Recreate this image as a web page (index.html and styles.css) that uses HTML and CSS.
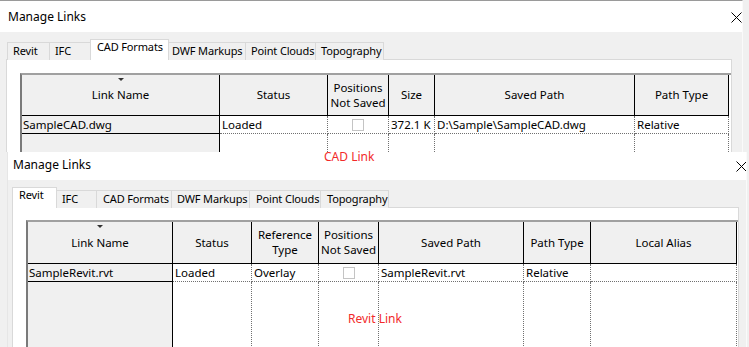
FILE: index.html
```html
<!DOCTYPE html>
<html>
<head>
<meta charset="utf-8">
<link rel="stylesheet" href="styles.css">
</head>
<body>
<div class="desk">
  <div class="dlg dlg1">
    <div class="titlebar">
      <span class="title">Manage Links</span>
      <svg class="close" width="11" height="11" viewBox="0 0 11 11"><path d="M0.5 0.5 L10.5 10.5 M10.5 0.5 L0.5 10.5" stroke="#000" stroke-width="1" fill="none"/></svg>
    </div>
    <div class="body">
      <div class="tabs">
        <div class="tab t1a">Revit</div>
        <div class="tab t1b">IFC</div>
        <div class="tab sel t1c">CAD Formats</div>
        <div class="tab t1d">DWF Markups</div>
        <div class="tab t1e">Point Clouds</div>
        <div class="tab t1f">Topography</div>
      </div>
      <div class="panel panel1">
        <div class="grid grid1">
          <div class="h first"><span class="sort"></span>Link Name</div>
          <div class="h">Status</div>
          <div class="h">Positions<br>Not Saved</div>
          <div class="h">Size</div>
          <div class="h">Saved Path</div>
          <div class="h">Path Type</div>

          <div class="rh">SampleCAD.dwg</div>
          <div class="c">Loaded</div>
          <div class="c center"><span class="chk"></span></div>
          <div class="c">372.1 K</div>
          <div class="c">D:\Sample\SampleCAD.dwg</div>
          <div class="c">Relative</div>

          <div class="rhf"></div>
          <div class="f"></div>
          <div class="f"></div>
          <div class="f"></div>
          <div class="f"></div>
          <div class="f"></div>
        </div>
      </div>
    </div>
  </div>

  <div class="dlg dlg2">
    <div class="titlebar">
      <span class="title">Manage Links</span>
      <svg class="close" width="11" height="11" viewBox="0 0 11 11"><path d="M0.5 0.5 L10.5 10.5 M10.5 0.5 L0.5 10.5" stroke="#000" stroke-width="1" fill="none"/></svg>
    </div>
    <div class="body">
      <div class="tabs">
        <div class="tab sel t2a">Revit</div>
        <div class="tab t2b">IFC</div>
        <div class="tab t2c">CAD Formats</div>
        <div class="tab t2d">DWF Markups</div>
        <div class="tab t2e">Point Clouds</div>
        <div class="tab t2f">Topography</div>
      </div>
      <div class="panel panel2">
        <div class="grid grid2">
          <div class="h first"><span class="sort"></span>Link Name</div>
          <div class="h">Status</div>
          <div class="h">Reference<br>Type</div>
          <div class="h">Positions<br>Not Saved</div>
          <div class="h">Saved Path</div>
          <div class="h">Path Type</div>
          <div class="h">Local Alias</div>

          <div class="rh">SampleRevit.rvt</div>
          <div class="c">Loaded</div>
          <div class="c">Overlay</div>
          <div class="c center"><span class="chk"></span></div>
          <div class="c">SampleRevit.rvt</div>
          <div class="c">Relative</div>
          <div class="c"></div>

          <div class="rhf"></div>
          <div class="f"></div>
          <div class="f"></div>
          <div class="f"></div>
          <div class="f"></div>
          <div class="f"></div>
          <div class="f"></div>
        </div>
      </div>
    </div>
  </div>

  <span class="note note-cad">CAD Link</span>
  <span class="note note-revit">Revit Link</span>
</div>
</body>
</html>
```

FILE: styles.css
```css
* { box-sizing: border-box; }
html, body {
  margin: 0;
  padding: 0;
  width: 749px;
  height: 347px;
  overflow: hidden;
  background: #f0f0f0;
}
body {
  font-family: "Noto Sans", "Open Sans", sans-serif;
  font-size: 11.5px;
  color: #000;
}
.desk {
  position: relative;
  width: 749px;
  height: 347px;
  overflow: hidden;
}
.dlg {
  background: #f0f0f0;
  overflow: hidden;
}
.dlg1 {
  width: 743px;
  height: 152px;
  border-top: 1px solid #9a9a9a;
  border-right: 1px solid #fafafa;
}
.dlg2 {
  position: absolute;
  left: 7px;
  top: 152px;
  width: 740px;
  height: 195px;
  border-left: 1px solid #e6e6e6;
  border-right: 1px solid #fafafa;
}
.titlebar {
  background: #fff;
  display: flex;
  align-items: center;
  justify-content: space-between;
}
.dlg1 .titlebar {
  height: 31px;
  padding: 0 0 0 8px;
}
.dlg1 .close { margin-right: 0px; margin-top: 2px; }
.dlg2 .titlebar {
  height: 28px;
  padding: 0 0 0 5px;
}
.dlg2 .close { margin-right: -1px; margin-top: 0px; }
.title {
  font-size: 12px;
  line-height: 16px;
}
.dlg1 .title { margin-top: 0px; }
.dlg2 .title { margin-top: -2px; }

.body {
  padding-top: 7px;
}
.tabs {
  display: flex;
  align-items: flex-end;
  height: 21px;
  margin-bottom: -1px;
  position: relative;
  z-index: 1;
  font-size: 11px;
  letter-spacing: -0.15px;
}
.dlg1 .tabs { padding-left: 7px; }
.dlg2 .tabs { padding-left: 4px; }
.tab {
  height: 18px;
  background: #f0f0f0;
  border: 1px solid #d9d9d9;
  border-bottom: none;
  margin-right: -1px;
  padding-left: 5px;
  line-height: 16px;
  white-space: nowrap;
  overflow: hidden;
}
.tab.sel {
  height: 21px;
  background: #fff;
  line-height: 14px;
  padding-left: 6px;
}
.t1a { width: 43px; }
.t1b { width: 42px; }
.t1c { width: 79px; }
.t1d { width: 78px; padding-left: 3px; }
.t1e { width: 71px; }
.t1f { width: 69px; }
.t2a { width: 45px; }
.t2b { width: 41px; }
.t2c { width: 76px; padding-left: 6px; }
.t2d { width: 79px; }
.t2e { width: 72px; padding-left: 6px; }
.t2f { width: 69px; padding-left: 6px; }

.panel {
  background: #fff;
  border: 1px solid #d9d9d9;
}
.panel1 {
  margin-left: 6px;
  width: 726px;
  height: 200px;
  padding: 13px 0 0 13px;
}
.panel2 {
  margin-left: 4px;
  width: 727px;
  height: 200px;
  padding: 12px 0 0 13px;
}
.grid {
  display: grid;
  border-top: 2px solid #a0a0a0;
  border-left: 2px solid #7a7a7a;
  line-height: 15px;
}
.grid1 {
  grid-template-columns: 198px 108px 61px 46px 200px 94px;
  grid-template-rows: 41px 18px 120px;
}
.grid2 {
  grid-template-columns: 145px 79px 67px 60px 145px 67px 146px;
  grid-template-rows: 42px 18px 120px;
}
.h {
  position: relative;
  background: #f0f0f0;
  border-right: 1px solid #000;
  border-bottom: 1px solid #000;
  display: flex;
  align-items: center;
  justify-content: center;
  text-align: center;
  padding-bottom: 1px;
}
.sort {
  position: absolute;
  top: 3px;
  left: 50%;
  margin-left: -3px;
  width: 0;
  height: 0;
  border-left: 3px solid transparent;
  border-right: 3px solid transparent;
  border-top: 3px solid #333;
}
.rh {
  background: #f0f0f0;
  border-right: 1px solid #000;
  border-bottom: 1px solid #000;
  padding-left: 1px;
  padding-bottom: 1px;
  display: flex;
  align-items: center;
  white-space: nowrap;
}
.c {
  background: #fff;
  border-right: 1px dotted #707070;
  border-bottom: 1px dotted #707070;
  padding-left: 2px;
  padding-bottom: 1px;
  display: flex;
  align-items: center;
  white-space: nowrap;
}
.c.center { justify-content: center; padding-left: 0; padding-bottom: 0; }
.chk {
  width: 12px;
  height: 12px;
  border: 1px solid #c4c4c4;
  background: #fff;
}
.rhf {
  background: #f0f0f0;
  border-right: 1px solid #000;
}
.f {
  background: #fff;
  border-right: 1px dotted #707070;
}
.note {
  position: absolute;
  color: #f22a2a;
  font-size: 12px;
  line-height: 16px;
  white-space: nowrap;
}
.note-cad { left: 324px; top: 149px; }
.note-revit { left: 348px; top: 311px; }
```
